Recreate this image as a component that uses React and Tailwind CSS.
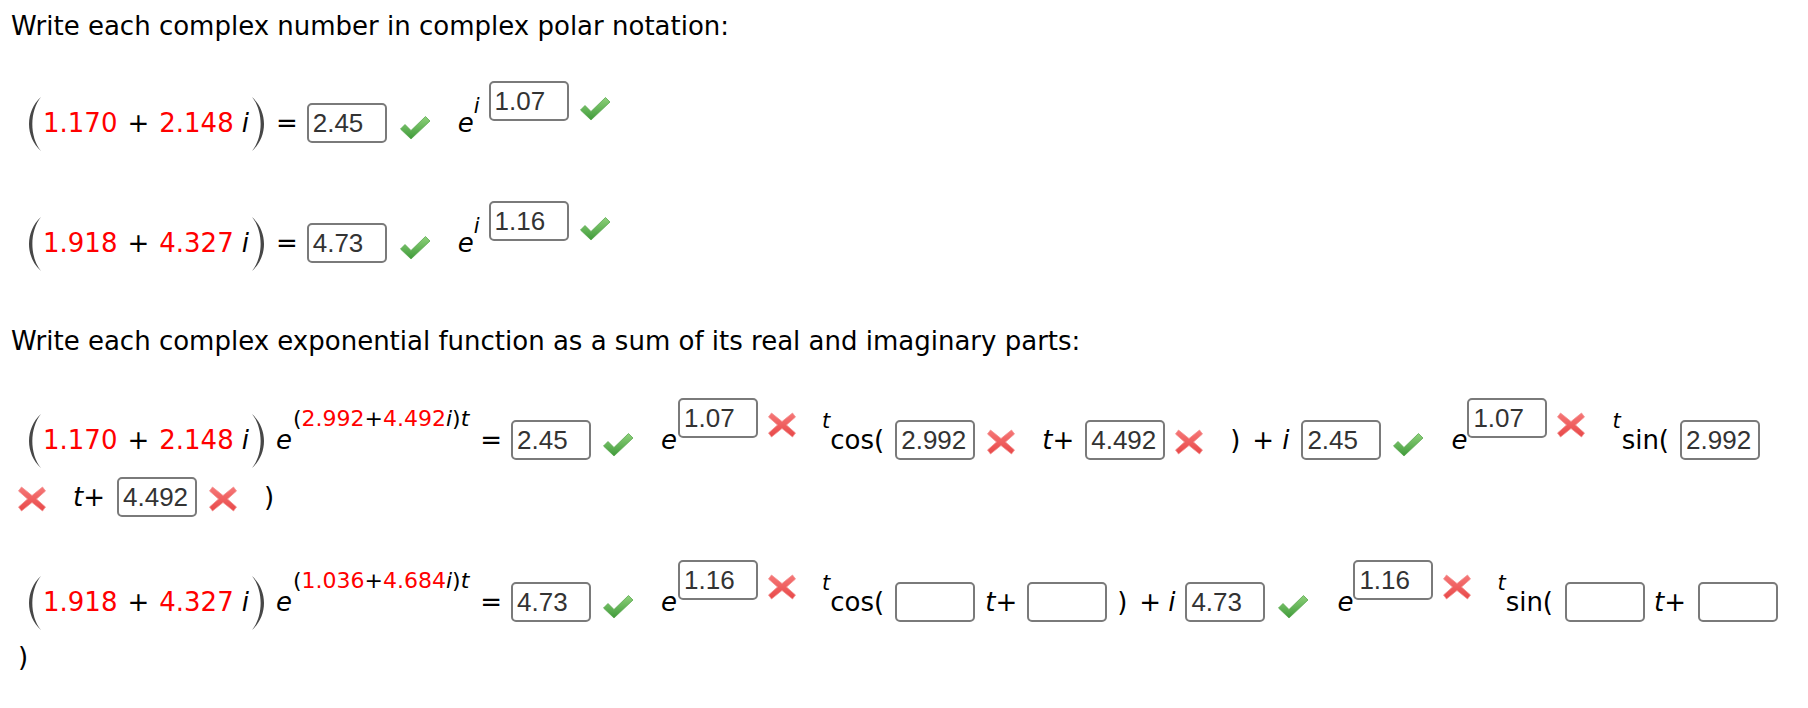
import React from 'react';

const Box = ({ v, m = '', a = 'align-baseline' }) => (
  <span className={`${m} ${a} inline-block w-[80px] h-[40px] border-2 border-[#7a7a7a] rounded-[5px] pl-[4px] text-left text-[26px] leading-[36px] text-[#333] font-['Liberation_Sans',Arial,sans-serif]`}>
    {v || '\u00a0'}
  </span>
);

const Check = ({ m = '', a = 'align-[-8px]' }) => (
  <svg className={`${m} ${a} inline-block w-[32px] h-[25px]`} viewBox="0 0 32 25">
    <defs>
      <linearGradient id="chk" x1="0" y1="0" x2="0" y2="1">
        <stop offset="0" stopColor="#8ed17a" />
        <stop offset="1" stopColor="#3f9a3a" />
      </linearGradient>
    </defs>
    <path d="M1.5 14 L6 9.5 L12 15.5 L26.5 1.5 L31 6 L12 24 Z" fill="url(#chk)" stroke="#5aa84f" strokeWidth="0.8" strokeLinejoin="round" />
  </svg>
);

const Cross = ({ m = '', a = 'align-[-6px]' }) => (
  <svg className={`${m} ${a} inline-block w-[28px] h-[26px]`} viewBox="0 0 28 26">
    <defs>
      <linearGradient id="crs" x1="0" y1="0" x2="0" y2="1">
        <stop offset="0" stopColor="#f67878" />
        <stop offset="1" stopColor="#e84848" />
      </linearGradient>
    </defs>
    <path d="M3.5 1 L14 9.5 L24.5 1 L27.5 5 L18.5 13 L27.5 21 L24.5 25 L14 16.5 L3.5 25 L0.5 21 L9.5 13 L0.5 5 Z" fill="url(#crs)" stroke="#f39090" strokeWidth="0.8" strokeLinejoin="round" />
  </svg>
);

const ParenL = ({ m = '' }) => (
  <svg className={`${m} inline-block w-[18px] h-[56px] align-[-20px]`} viewBox="0 0 18 56">
    <path d="M16 1 C0 15 0 41 16 55 C4.5 41 4.5 15 16 1 Z" fill="#474747" />
  </svg>
);

const ParenR = ({ m = '' }) => (
  <svg className={`${m} inline-block w-[18px] h-[56px] align-[-20px]`} viewBox="0 0 18 56">
    <path d="M2 1 C18 15 18 41 2 55 C13.5 41 13.5 15 2 1 Z" fill="#474747" />
  </svg>
);

const T = ({ m = '', className = '', children }) => (
  <span className={`${m} ${className} inline-block leading-[30px]`}>{children}</span>
);

const Num = ({ a, b }) => (
  <span className="inline-block leading-[30px]">
    <span className="text-[#f00]">{a}</span>
    <span className="ml-[10px]">+</span>
    <span className="ml-[10px] text-[#f00]">{b}</span>
    <span className="ml-[8px] italic">i</span>
  </span>
);

const PolarRow = ({ a, b, r, th, h }) => (
  <div className={`${h} leading-[96px] whitespace-nowrap`}>
    <ParenL m="ml-[25px]" />
    <Num a={a} b={b} />
    <ParenR m="ml-[1px]" />
    <T m="ml-[8px]">=</T>
    <Box m="ml-[9px]" v={r} />
    <Check m="ml-[12px]" />
    <T m="ml-[27px]" className="italic">e</T>
    <T className="italic text-[21px] align-[19px]">i</T>
    <Box m="ml-[9px]" a="align-[22px]" v={th} />
    <Check m="ml-[10px]" a="align-[11px]" />
  </div>
);

const ExpHead = ({ a, b, p, q, r, th }) => (
  <>
    <ParenL m="ml-[25px]" />
    <Num a={a} b={b} />
    <ParenR m="ml-[1px]" />
    <T m="ml-[8px]" className="italic">e</T>
    <span className="ml-[1px] inline-block text-[22px] leading-[30px] align-[23px]">
      (<span className="text-[#f00]">{p}</span>+<span className="text-[#f00]">{q}</span><i>i</i>)<i>t</i>
    </span>
    <T m="ml-[11px]">=</T>
    <Box m="ml-[9px]" v={r} />
    <Check m="ml-[11px]" />
    <T m="ml-[27px]" className="italic">e</T>
    <Box m="ml-[1px]" a="align-[22px]" v={th} />
    <Cross m="ml-[10px]" a="align-[11px]" />
    <T m="ml-[26px]" className="italic text-[21px] align-[21px]">t</T>
    <T>cos(</T>
  </>
);

export default function App() {
  return (
    <div className="w-full h-[708px] overflow-hidden bg-white text-black text-[26px] font-['DejaVu_Sans',Verdana,sans-serif] pt-[11px]">
      <div className="h-[30px] leading-[30px] ml-[11px] whitespace-nowrap">
        Write each complex number in complex polar notation:
      </div>
      <div className="mt-[34px]">
        <PolarRow h="h-[120px]" a="1.170" b="2.148" r="2.45" th="1.07" />
        <PolarRow h="h-[131px]" a="1.918" b="4.327" r="4.73" th="1.16" />
      </div>
      <div className="h-[66px] leading-[30px] ml-[11px] whitespace-nowrap">
        Write each complex exponential function as a sum of its real and imaginary parts:
      </div>

      <div className="h-[57px] leading-[96px] whitespace-nowrap">
        <ExpHead a="1.170" b="2.148" p="2.992" q="4.492" r="2.45" th="1.07" />
        <Box m="ml-[11px]" v="2.992" />
        <Cross m="ml-[12px]" />
        <T m="ml-[27px]"><i>t</i>+</T>
        <Box m="ml-[11px]" v="4.492" />
        <Cross m="ml-[10px]" />
        <T m="ml-[27px]">)</T>
        <T m="ml-[12px]">+</T>
        <T m="ml-[8px]" className="italic">i</T>
        <Box m="ml-[12px]" v="2.45" />
        <Check m="ml-[11px]" />
        <T m="ml-[27px]" className="italic">e</T>
        <Box a="align-[22px]" v="1.07" />
        <Cross m="ml-[10px]" a="align-[11px]" />
        <T m="ml-[27px]" className="italic text-[21px] align-[21px]">t</T>
        <T m="ml-[1px]">sin(</T>
        <Box m="ml-[11px]" v="2.992" />
      </div>
      <div className="h-[105px] leading-[96px] whitespace-nowrap">
        <Cross m="ml-[18px]" />
        <T m="ml-[27px]"><i>t</i>+</T>
        <Box m="ml-[12px]" v="4.492" />
        <Cross m="ml-[12px]" />
        <T m="ml-[27px]">)</T>
      </div>

      <div className="h-[55px] leading-[96px] whitespace-nowrap">
        <ExpHead a="1.918" b="4.327" p="1.036" q="4.684" r="4.73" th="1.16" />
        <Box m="ml-[11px]" />
        <T m="ml-[10px]"><i>t</i>+</T>
        <Box m="ml-[10px]" />
        <T m="ml-[10px]">)</T>
        <T m="ml-[12px]">+</T>
        <T m="ml-[7px]" className="italic">i</T>
        <Box m="ml-[10px]" v="4.73" />
        <Check m="ml-[12px]" />
        <T m="ml-[28px]" className="italic">e</T>
        <Box a="align-[22px]" v="1.16" />
        <Cross m="ml-[10px]" a="align-[11px]" />
        <T m="ml-[26px]" className="italic text-[21px] align-[21px]">t</T>
        <T>sin(</T>
        <Box m="ml-[12px]" />
        <T m="ml-[9px]"><i>t</i>+</T>
        <Box m="ml-[12px]" />
      </div>
      <div className="leading-[96px] whitespace-nowrap">
        <T m="ml-[18px]">)</T>
      </div>
    </div>
  );
}
